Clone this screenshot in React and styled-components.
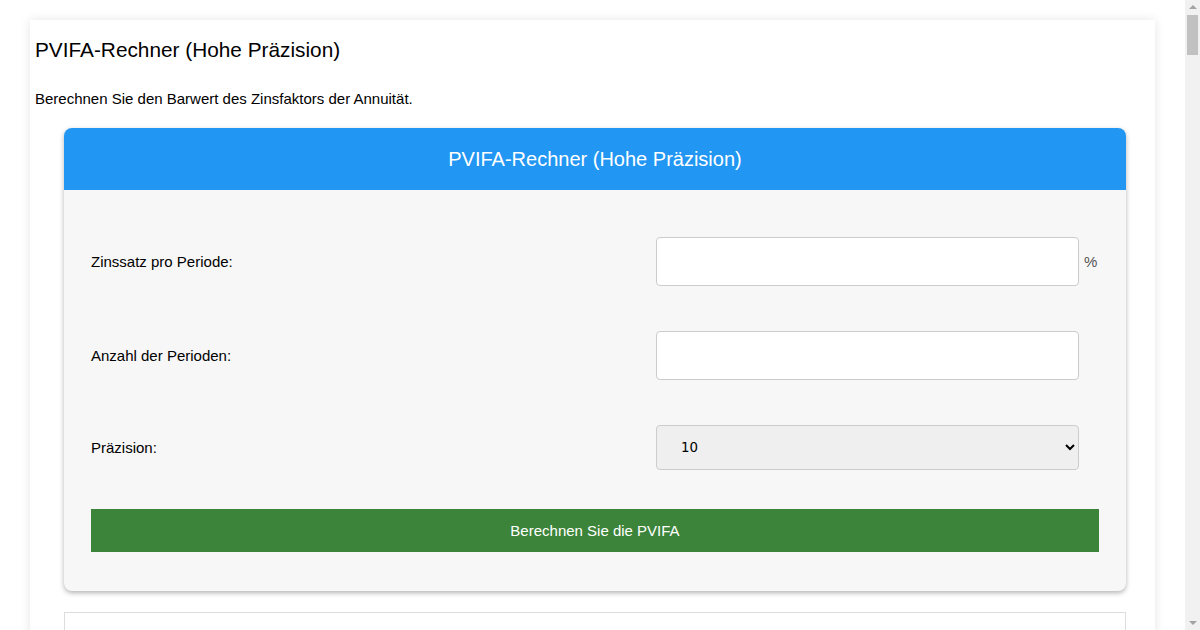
import styled, { createGlobalStyle } from "styled-components";

const GlobalStyle = createGlobalStyle`
  html, body {
    margin: 0;
    padding: 0;
    background: #fff;
    font-family: "Liberation Sans", Arial, sans-serif;
    color: #000;
  }
`;

const Page = styled.main`
  margin: 20px 45px 20px 30px;
  padding: 18px 5px 40px;
  box-sizing: border-box;
  background: #fff;
  box-shadow: 0 0 10px rgba(0, 0, 0, 0.1);
  min-height: 9300px;
`;

const PageTitle = styled.h1`
  font-size: 20.8px;
  font-weight: normal;
  margin: 0 0 28px;
  line-height: 24px;
`;

const Intro = styled.p`
  font-size: 15px;
  margin: 0 0 21px;
  line-height: 17px;
`;

const Calculator = styled.section`
  width: 1062px;
  margin-left: 29px;
  border-radius: 8px;
  overflow: hidden;
  background: #f7f7f7;
  box-shadow: 0 2px 5px rgba(0, 0, 0, 0.3);
`;

const CalcHeader = styled.header`
  height: 62px;
  display: flex;
  align-items: center;
  justify-content: center;
  background: #2196f3;
  color: #fff;
  font-size: 20px;
`;

const CalcBody = styled.form`
  padding: 47px 27px 39px;
  display: flex;
  flex-direction: column;
`;

const Fields = styled.div`
  display: flex;
  flex-direction: column;
  gap: 45.5px;
`;

const Row = styled.div`
  display: grid;
  grid-template-columns: 1fr 423px 20px;
  align-items: center;
`;

const Label = styled.label`
  font-size: 15px;
`;

const TextInput = styled.input`
  box-sizing: border-box;
  width: 100%;
  height: 48.5px;
  border: 1px solid #ccc;
  border-radius: 4px;
  background: #fff;
  padding: 0 12px;
  font-size: 15px;
  font-family: inherit;
`;

const Select = styled.select`
  box-sizing: border-box;
  width: 100%;
  height: 45px;
  border: 1px solid #ccc;
  border-radius: 4px;
  background: #efefef;
  padding: 0 20px;
  font: 13.333px "DejaVu Sans", sans-serif;
  color: #000;
`;

const Unit = styled.span`
  font-size: 15px;
  color: #555;
  margin-left: 5px;
`;

const SubmitButton = styled.button`
  margin-top: 39px;
  height: 43px;
  border: none;
  background: #3c843a;
  color: #fff;
  font: 15px "Liberation Sans", Arial, sans-serif;
  cursor: pointer;
`;

const ResultBox = styled.section`
  width: 1062px;
  margin: 21px 0 0 29px;
  box-sizing: border-box;
  min-height: 120px;
  border: 1px solid #ddd;
  background: #fff;
`;

/* window scrollbar as it shows in the screenshot */
const ScrollTrack = styled.div`
  position: fixed;
  top: 0;
  right: 0;
  bottom: 0;
  width: 15px;
  background: #f1f1f1;
  display: flex;
  flex-direction: column;
  align-items: center;
  padding: 5px 0;
  box-sizing: border-box;
`;

const Arrow = styled.span`
  width: 0;
  height: 0;
  border-left: 4px solid transparent;
  border-right: 4px solid transparent;
  ${(p) =>
    p.$down
      ? "border-top: 4px solid #a3a3a3; margin-top: auto;"
      : "border-bottom: 4px solid #a3a3a3;"}
`;

const Thumb = styled.span`
  width: 11px;
  height: 40px;
  margin-top: 6px;
  background: #c1c1c1;
`;

export default function App() {
  return (
    <>
      <GlobalStyle />
      <Page>
        <PageTitle>PVIFA-Rechner (Hohe Präzision)</PageTitle>
        <Intro>Berechnen Sie den Barwert des Zinsfaktors der Annuität.</Intro>
        <Calculator>
          <CalcHeader>PVIFA-Rechner (Hohe Präzision)</CalcHeader>
          <CalcBody onSubmit={(e) => e.preventDefault()}>
            <Fields>
              <Row>
                <Label htmlFor="rate">Zinssatz pro Periode:</Label>
                <TextInput id="rate" type="text" />
                <Unit>%</Unit>
              </Row>
              <Row>
                <Label htmlFor="periods">Anzahl der Perioden:</Label>
                <TextInput id="periods" type="text" />
              </Row>
              <Row>
                <Label htmlFor="precision">Präzision:</Label>
                <Select id="precision" defaultValue="10">
                  <option value="2">2</option>
                  <option value="4">4</option>
                  <option value="6">6</option>
                  <option value="8">8</option>
                  <option value="10">10</option>
                  <option value="15">15</option>
                  <option value="20">20</option>
                </Select>
              </Row>
            </Fields>
            <SubmitButton type="submit">Berechnen Sie die PVIFA</SubmitButton>
          </CalcBody>
        </Calculator>
        <ResultBox />
      </Page>
      <ScrollTrack aria-hidden="true">
        <Arrow />
        <Thumb />
        <Arrow $down />
      </ScrollTrack>
    </>
  );
}
